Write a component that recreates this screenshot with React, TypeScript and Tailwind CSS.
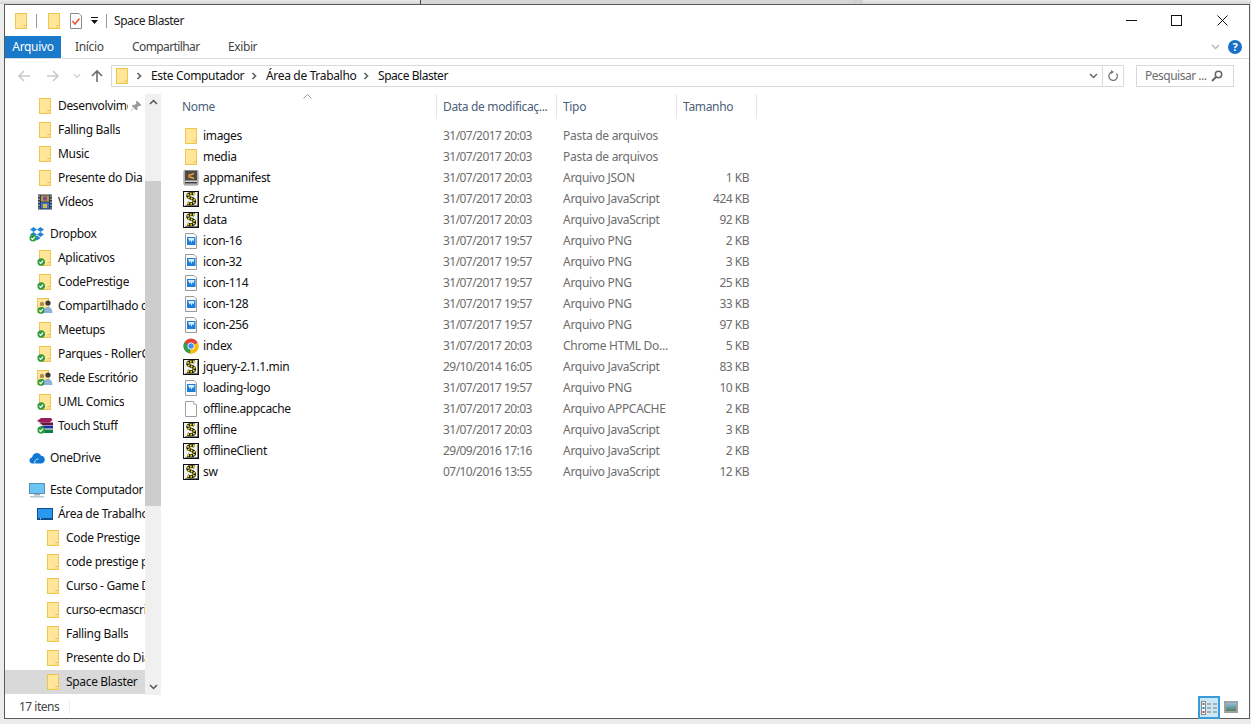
import React from "react";

const Folder = () => (
  <svg width="16" height="16" viewBox="0 0 16 16">
    <rect x="2.500" y="0.500" width="11" height="15" fill="#ffe698" stroke="#eec64f" />
    <path d="M11 15.500V12.500H13.500" fill="#fff2c0" stroke="#eec64f" />
  </svg>
);

const Check = () => (
  <g>
    <circle cx="4.200" cy="12" r="3.800" fill="#2f9e3f" />
    <path d="M2.400 12l1.300 1.400 2.400-2.700" fill="none" stroke="#fff" strokeWidth="1.200" />
  </g>
);

const SyncFolder = () => (
  <svg width="16" height="16" viewBox="0 0 16 16">
    <rect x="2.500" y="0.500" width="11" height="15" fill="#ffe698" stroke="#eec64f" />
    <path d="M11 15.500V12.500H13.500" fill="#fff2c0" stroke="#eec64f" />
    <Check />
  </svg>
);

const SharedFolder = () => (
  <svg width="16" height="16" viewBox="0 0 16 16">
    <rect x="0.500" y="0.500" width="11" height="14" fill="#ffe698" stroke="#eec64f" />
    <circle cx="5" cy="6" r="2.200" fill="#b58a63" />
    <path d="M1.500 13c0-3 1.500-4 3.500-4s3 1 3 4z" fill="#7d9b75" />
    <circle cx="11" cy="5" r="2.600" fill="#3c3a3a" />
    <path d="M6.500 15c0-4 2-6 4.500-6s4.500 2 4.500 6z" fill="#8fb2d8" />
    <circle cx="4" cy="12.400" r="3.400" fill="#2f9e3f" />
    <path d="M2.300 12.400l1.300 1.300 2.300-2.600" fill="none" stroke="#fff" strokeWidth="1.200" />
  </svg>
);

const Rar = () => (
  <svg width="16" height="16" viewBox="0 0 16 16">
    <path d="M0 3l4-3h10l1.500 2-3 2.500H3z" fill="#9a1c58" />
    <rect x="3" y="4.500" width="13" height="2.500" fill="#6e123c" />
    <rect x="4" y="7.500" width="12" height="3" fill="#1e2f9c" />
    <rect x="4" y="11.500" width="12" height="3.500" fill="#0f7f4a" />
    <path d="M0 3.500l5.500 4.500" stroke="#e5e5e5" strokeWidth="1.500" />
    <Check />
  </svg>
);

const Js = () => (
  <svg width="16" height="16" viewBox="0 0 16 16">
    <rect x="0.500" y="0.500" width="15" height="15" fill="#f4f4ee" stroke="#111" />
    <path d="M15 1.500V15H2" fill="none" stroke="#111" />
    <path d="M11.500 3C8 1.800 4.500 3 5 5.300c.5 2.200 6.500 2 6.500 4.700 0 2.700-4 3.500-7 2" fill="none" stroke="#111" strokeWidth="3.200" />
    <path d="M11.500 3C8 1.800 4.500 3 5 5.300c.5 2.200 6.500 2 6.500 4.700 0 2.700-4 3.500-7 2" fill="none" stroke="#f5e51e" strokeWidth="2" strokeDasharray="1.600 1.300" />
  </svg>
);

const Png = () => (
  <svg width="16" height="16" viewBox="0 0 16 16">
    <path d="M2.500 0.500H11L13.500 3V15.500H2.500z" fill="#fbfbfb" stroke="#9a9a9a" />
    <rect x="4" y="4" width="8.500" height="8" fill="#1a7fd8" />
    <path d="M5 5h6.500l-1 3.500-1-1.500-1 3-1-3-1 1.500z" fill="#d8edfb" />
  </svg>
);

const Doc = () => (
  <svg width="16" height="16" viewBox="0 0 16 16">
    <path d="M2.500 0.500H10.500L13.500 3.500V15.500H2.500z" fill="#fff" stroke="#a0a0a0" />
    <path d="M10.500 0.500V3.500H13.500" fill="#f2f2f2" stroke="#c0c0c0" />
  </svg>
);

const Sublime = () => (
  <svg width="16" height="16" viewBox="0 0 16 16">
    <rect x="1" y="0.500" width="14" height="14.500" rx="1" fill="#d4d4d4" stroke="#8a8a8a" />
    <rect x="2" y="1" width="12" height="9.500" fill="#4a4a4a" />
    <path d="M5 6.500l6-2V2.800L5 4.800zM5 5.500l6 2V9.200L5 7.200z" fill="#ee9a30" />
    <rect x="2" y="12" width="12" height="1.500" fill="#3a3a3a" />
  </svg>
);

const Chrome = () => (
  <svg width="16" height="16" viewBox="0 0 16 16">
    <circle cx="8" cy="8" r="7.500" fill="#db4437" />
    <path d="M8 8L1.500 4.200A7.500 7.500 0 0 0 7 15.400z" fill="#2f9e4f" />
    <path d="M8 8l6.800-3.200A7.500 7.500 0 0 1 7 15.400z" fill="#f4c20d" />
    <circle cx="8" cy="8" r="3.500" fill="#fff" />
    <circle cx="8" cy="8" r="2.700" fill="#4a89f3" />
  </svg>
);

const Videos = () => (
  <svg width="16" height="16" viewBox="0 0 16 16">
    <rect x="1" y="0.500" width="14" height="15" fill="#2c3d5c" />
    <path d="M2 1.500v13M14 1.500v13" stroke="#cfd6e0" strokeWidth="1.200" strokeDasharray="1.500 1.500" />
    <rect x="4" y="1.500" width="8" height="6" fill="#c79a2c" />
    <rect x="4" y="8.500" width="8" height="6" fill="#3b77c9" />
    <rect x="6" y="2.500" width="4" height="4" fill="#7a4fa0" />
    <rect x="6" y="10" width="4" height="4" fill="#d9b94a" />
  </svg>
);

const Dropbox = () => (
  <svg width="16" height="16" viewBox="0 0 16 16">
    <path d="M4.500 1L1 3.500 4.500 6 8 3.500zM11.500 1L8 3.500 11.500 6 15 3.500zM4.500 6L1 8.500 4.500 11 8 8.500zM11.500 6L8 8.500 11.500 11 15 8.500zM8 9.500l-3.500 2.400L8 14.500l3.500-2.600z" fill="#1f86d9" />
    <circle cx="4" cy="12" r="3.500" fill="#2f9e3f" />
    <path d="M2.300 12l1.300 1.400 2.300-2.600" fill="none" stroke="#fff" strokeWidth="1.200" />
  </svg>
);

const OneDrive = () => (
  <svg width="16" height="16" viewBox="0 0 16 16">
    <path d="M3.500 13.500C1.500 13.500 0.500 12 0.500 10.500c0-1.500 1-2.700 2.500-2.900C3.500 5 5.500 3 8 3c1.800 0 3.400 1 4 2.700 2.200 0 3.800 1.600 3.800 3.900 0 2.200-1.500 3.900-3.300 3.900z" fill="#0f78d4" />
    <path d="M6 13.500c-1-2.500 1-4.500 3.500-4.500" fill="none" stroke="#fff" strokeWidth="0.800" />
  </svg>
);

const Pc = () => (
  <svg width="16" height="16" viewBox="0 0 16 16">
    <rect x="0.500" y="1.500" width="15" height="10" fill="#6cc4f5" stroke="#5a8fb5" />
    <rect x="5" y="12" width="6" height="1.500" fill="#9ab0c0" />
    <rect x="1" y="14" width="14" height="1.500" fill="#b8c6d0" />
  </svg>
);

const Desktop = () => (
  <svg width="16" height="16" viewBox="0 0 16 16">
    <rect x="0.500" y="2.500" width="15" height="11" fill="#2b98f0" stroke="#0f4f8f" />
    <rect x="1" y="12" width="14" height="1.500" fill="#0f4f8f" />
    <rect x="3" y="12.300" width="1" height="1" fill="#fff" />
  </svg>
);

const Chev = ({ up = false, color = "#6d6d6d", w = 9 }: { up?: boolean; color?: string; w?: number }) => (
  <svg width={w} height="6" viewBox="0 0 9 6">
    <path d={up ? "M1 5l3.500-3.500L8 5" : "M1 1l3.500 3.500L8 1"} fill="none" stroke={color} strokeWidth="1.500" />
  </svg>
);

const Crumb = () => (
  <svg width="6" height="8" viewBox="0 0 6 8">
    <path d="M1.500 1l3 3-3 3" fill="none" stroke="#666" strokeWidth="1.700" />
  </svg>
);

const Arrow = ({ d, color }: { d: string; color: string }) => (
  <svg width="14" height="14" viewBox="0 0 14 14">
    <path d={d} fill="none" stroke={color} strokeWidth="1.600" />
  </svg>
);

type NavItem = { label: string; icon?: React.ReactNode; level: number; gap?: boolean; selected?: boolean; pin?: boolean };

const nav: NavItem[] = [
  { label: "Desenvolvimento", icon: <Folder />, level: 1, pin: true },
  { label: "Falling Balls", icon: <Folder />, level: 1 },
  { label: "Music", icon: <Folder />, level: 1 },
  { label: "Presente do Dia dos Pais", icon: <Folder />, level: 1 },
  { label: "Vídeos", icon: <Videos />, level: 1 },
  { label: "Dropbox", icon: <Dropbox />, level: 0, gap: true },
  { label: "Aplicativos", icon: <SyncFolder />, level: 1 },
  { label: "CodePrestige", icon: <SyncFolder />, level: 1 },
  { label: "Compartilhado com", icon: <SharedFolder />, level: 1 },
  { label: "Meetups", icon: <SyncFolder />, level: 1 },
  { label: "Parques - RollerCoaster", icon: <SyncFolder />, level: 1 },
  { label: "Rede Escritório", icon: <SharedFolder />, level: 1 },
  { label: "UML Comics", icon: <SyncFolder />, level: 1 },
  { label: "Touch Stuff", icon: <Rar />, level: 1 },
  { label: "OneDrive", icon: <OneDrive />, level: 0, gap: true },
  { label: "Este Computador", icon: <Pc />, level: 0, gap: true },
  { label: "Área de Trabalho", icon: <Desktop />, level: 1 },
  { label: "Code Prestige", icon: <Folder />, level: 2 },
  { label: "code prestige project", icon: <Folder />, level: 2 },
  { label: "Curso - Game Development", icon: <Folder />, level: 2 },
  { label: "curso-ecmascript", icon: <Folder />, level: 2 },
  { label: "Falling Balls", icon: <Folder />, level: 2 },
  { label: "Presente do Dia dos Pais", icon: <Folder />, level: 2 },
  { label: "Space Blaster", icon: <Folder />, level: 2, selected: true },
];

const levelClass = ["pl-[24px]", "pl-[32px]", "pl-[40px]"];

const files: [React.ReactNode, string, string, string, string][] = [
  [<Folder />, "images", "31/07/2017 20:03", "Pasta de arquivos", ""],
  [<Folder />, "media", "31/07/2017 20:03", "Pasta de arquivos", ""],
  [<Sublime />, "appmanifest", "31/07/2017 20:03", "Arquivo JSON", "1 KB"],
  [<Js />, "c2runtime", "31/07/2017 20:03", "Arquivo JavaScript", "424 KB"],
  [<Js />, "data", "31/07/2017 20:03", "Arquivo JavaScript", "92 KB"],
  [<Png />, "icon-16", "31/07/2017 19:57", "Arquivo PNG", "2 KB"],
  [<Png />, "icon-32", "31/07/2017 19:57", "Arquivo PNG", "3 KB"],
  [<Png />, "icon-114", "31/07/2017 19:57", "Arquivo PNG", "25 KB"],
  [<Png />, "icon-128", "31/07/2017 19:57", "Arquivo PNG", "33 KB"],
  [<Png />, "icon-256", "31/07/2017 19:57", "Arquivo PNG", "97 KB"],
  [<Chrome />, "index", "31/07/2017 20:03", "Chrome HTML Do...", "5 KB"],
  [<Js />, "jquery-2.1.1.min", "29/10/2014 16:05", "Arquivo JavaScript", "83 KB"],
  [<Png />, "loading-logo", "31/07/2017 19:57", "Arquivo PNG", "10 KB"],
  [<Doc />, "offline.appcache", "31/07/2017 20:03", "Arquivo APPCACHE", "2 KB"],
  [<Js />, "offline", "31/07/2017 20:03", "Arquivo JavaScript", "3 KB"],
  [<Js />, "offlineClient", "29/09/2016 17:16", "Arquivo JavaScript", "2 KB"],
  [<Js />, "sw", "07/10/2016 13:55", "Arquivo JavaScript", "12 KB"],
];

const Sep = () => <div className="w-px h-[14px] bg-[#9a9a9a]" />;

export default function App() {
  return (
    <div className="w-[1251px] h-[724px] flex flex-col bg-[#ececec] overflow-hidden text-[12px] leading-[16px] tracking-[-0.33px] text-[#111] font-['Noto_Sans','Open_Sans',sans-serif]">
      <div className="h-[4px] shrink-0 flex bg-gradient-to-b from-[#ececec] to-[#d2d2d2]">
        <div className="w-[420px]" />
        <div className="w-px bg-[#444]" />
        <div className="w-[432px] bg-[#d6d6d6]" />
        <div className="w-[10px] bg-[#cfcfcf]" />
      </div>
      <div className="ml-[4px] mr-[1px] mb-[5px] flex-1 min-h-0 flex flex-col bg-white border border-[#5a5a5a]">
        {/* Title bar */}
        <div className="h-[31px] shrink-0 flex items-center">
          <div className="ml-[8px]"><Folder /></div>
          <div className="ml-[7px]"><Sep /></div>
          <div className="ml-[9px]"><Folder /></div>
          <div className="ml-[6px]">
            <svg width="16" height="16" viewBox="0 0 16 16">
              <path d="M2.500 0.500H11L13.500 3V15.500H2.500z" fill="#fdfdfd" stroke="#8a8a8a" />
              <path d="M4.500 8l2.500 3 4.500-5.500" fill="none" stroke="#e2562d" strokeWidth="1.500" />
            </svg>
          </div>
          <div className="ml-[7px] flex flex-col items-center gap-[2px]">
            <div className="w-[7px] h-px bg-[#111]" />
            <svg width="7" height="4" viewBox="0 0 7 4"><path d="M0 0h7L3.500 4z" fill="#111" /></svg>
          </div>
          <div className="ml-[8px]"><Sep /></div>
          <div className="ml-[7px] text-[#222] tracking-[-0.45px]">Space Blaster</div>
          <div className="ml-auto flex items-center">
            <div className="w-[11px] h-px bg-[#111]" />
            <div className="ml-[34px] w-[11px] h-[11px] border border-[#111]" />
            <svg className="ml-[35px] mr-[21px]" width="11" height="11" viewBox="0 0 11 11">
              <path d="M0.500 0.500l10 10M10.500 0.500l-10 10" stroke="#111" strokeWidth="1" />
            </svg>
          </div>
        </div>
        {/* Tabs */}
        <div className="h-[23px] shrink-0 flex items-stretch border-b border-[#dadbdc] text-[#444]">
          <div className="w-[56px] bg-[#1979ca] text-white flex items-center justify-center">Arquivo</div>
          <div className="ml-[14px] w-[57px] flex items-center">Início</div>
          <div className="w-[96px] flex items-center tracking-[-0.6px]">Compartilhar</div>
          <div className="flex items-center tracking-[-0.4px]">Exibir</div>
          <div className="ml-auto flex items-center gap-[7px] mr-[7px]">
            <Chev color="#b8b8b8" w={11} />
            <div className="w-[14px] h-[14px] rounded-full bg-[#1a6fc9] text-white text-[11px] font-bold flex items-center justify-center">?</div>
          </div>
        </div>
        {/* Address */}
        <div className="h-[34px] shrink-0 flex items-center">
          <div className="ml-[12px] flex items-center">
            <Arrow d="M13 7H2M7 2L2 7l5 5" color="#c9c9c9" />
            <div className="ml-[15px]"><Arrow d="M1 7h11M7 2l5 5-5 5" color="#c9c9c9" /></div>
            <div className="ml-[13px]"><Chev color="#d0d0d0" w={8} /></div>
            <div className="ml-[9px]"><Arrow d="M7 13V2M2 7l5-5 5 5" color="#6d6d6d" /></div>
          </div>
          <div className="ml-[7px] w-[1013px] h-[22px] border border-[#d9d9d9] flex items-center">
            <div className="ml-[2px]"><Folder /></div>
            <div className="ml-[6px]"><Crumb /></div>
            <div className="ml-[9px] w-[94px] whitespace-nowrap">Este Computador</div>
            <div className="ml-[6px]"><Crumb /></div>
            <div className="ml-[9px] w-[91px] whitespace-nowrap">Área de Trabalho</div>
            <div className="ml-[6px]"><Crumb /></div>
            <div className="ml-[9px] whitespace-nowrap tracking-[-0.45px]">Space Blaster</div>
            <div className="ml-auto mr-[4px]"><Chev color="#666" /></div>
            <div className="w-[21px] self-stretch border-l border-[#d9d9d9] flex items-center justify-center">
              <svg width="12" height="12" viewBox="0 0 12 12">
                <path d="M9.500 3.500A4.300 4.300 0 1 1 5 2" fill="none" stroke="#777" strokeWidth="1.300" />
                <path d="M4 0v4l3-2z" fill="#777" />
              </svg>
            </div>
          </div>
          <div className="ml-[12px] w-[98px] h-[22px] border border-[#d9d9d9] flex items-center text-[#6d6d6d]">
            <span className="ml-[8px] whitespace-nowrap tracking-[-0.5px]">Pesquisar ...</span>
            <svg className="ml-auto mr-[10px]" width="12" height="12" viewBox="0 0 12 12">
              <circle cx="7.500" cy="4.500" r="3.200" fill="none" stroke="#666" strokeWidth="1.500" />
              <path d="M5 7l-4 4" stroke="#666" strokeWidth="2" />
            </svg>
          </div>
        </div>
        {/* Content */}
        <div className="flex-1 min-h-0 flex">
          <div className="w-[140px] shrink-0 pt-px overflow-hidden">
            {nav.map((n, i) => (
              <div key={i} className={`${n.gap ? "mt-[8px]" : ""} h-[24px] flex items-center whitespace-nowrap overflow-hidden ${levelClass[n.level]} ${n.selected ? "bg-[#d9d9d9]" : ""}`}>
                <div className="w-4 h-4 shrink-0">{n.icon}</div>
                <div className={`ml-[5px] overflow-hidden ${n.pin ? "w-[70px] shrink-0" : ""}`}>{n.label}</div>
                {n.pin && (
                  <svg className="ml-[3px] shrink-0" width="10" height="10" viewBox="0 0 10 10">
                    <path d="M6 0l4 4-1 1-1-.500-2 2 .300 2-1 .500-4-4 .500-1 2 .300 2-2L5 1zM3 6.500L0 10" fill="#999" stroke="#999" strokeWidth="0.600" />
                  </svg>
                )}
              </div>
            ))}
          </div>
          <div className="w-[16px] shrink-0 my-px bg-[#f0f0f0] flex flex-col">
            <div className="h-[16px] flex items-center justify-center"><Chev up color="#555" /></div>
            <div className="mt-[71px] h-[325px] bg-[#cdcdcd]" />
            <div className="mt-auto h-[16px] flex items-center justify-center"><Chev color="#555" /></div>
          </div>
          <div className="flex-1 min-w-0 relative">
            <svg className="absolute left-[142px] top-[1px]" width="9" height="5" viewBox="0 0 9 5">
              <path d="M0.500 4.500l4-4 4 4" fill="none" stroke="#9a9a9a" />
            </svg>
            <div className="mt-px h-[25px] flex items-center text-[#4c607a]">
              <div className="w-[276px] h-full pl-[21px] flex items-center border-r border-[#e5e5e5]">Nome</div>
              <div className="w-[120px] h-full pl-[6px] flex items-center border-r border-[#e5e5e5] whitespace-nowrap">Data de modificaç...</div>
              <div className="w-[120px] h-full pl-[6px] flex items-center border-r border-[#e5e5e5]">Tipo</div>
              <div className="w-[80px] h-full pl-[6px] flex items-center border-r border-[#e5e5e5]">Tamanho</div>
            </div>
            <div className="mt-[6px]">
              {files.map(([icon, name, date, type, size], i) => (
                <div key={i} className="h-[21px] flex items-center whitespace-nowrap">
                  <div className="w-[276px] pl-[22px] flex items-center">
                    <div className="w-4 h-4 shrink-0">{icon}</div>
                    <div className="ml-[4px]">{name}</div>
                  </div>
                  <div className="w-[120px] pl-[6px] text-[#6d6d6d] tracking-[-0.55px]">{date}</div>
                  <div className="w-[120px] pl-[6px] text-[#6d6d6d] tracking-[-0.28px]">{type}</div>
                  <div className="w-[72px] text-right text-[#6d6d6d] tracking-[-0.5px]">{size}</div>
                </div>
              ))}
            </div>
          </div>
        </div>
        {/* Status */}
        <div className="h-[22px] shrink-0 flex items-center text-[#444]">
          <div className="ml-[14px] tracking-[-0.5px]">17 itens</div>
          <div className="ml-[10px] w-px h-[14px] bg-[#efefef]" />
          <div className="ml-auto w-[22px] h-[23px] mt-px border-2 border-[#3a9bd9] bg-[#cce8f6] flex items-center justify-center">
            <svg width="16" height="14" viewBox="0 0 16 14">
              <rect x="0.500" y="0.500" width="4" height="13" fill="#fff" stroke="#888" />
              <rect x="1.500" y="2" width="2" height="2" fill="#777" />
              <rect x="1.500" y="6" width="2" height="2" fill="#2a7fd0" />
              <rect x="1.500" y="10" width="2" height="2" fill="#d04030" />
              <path d="M6 3h4M12 3h4M6 7h4M12 7h4M6 11h4M12 11h4" stroke="#777" />
            </svg>
          </div>
          <div className="ml-[4px] mr-[11px] w-[14px] h-[12px] border-2 border-[#a0a0a0] bg-gradient-to-b from-[#8fc0e8] to-[#4f7f5f]" />
        </div>
      </div>
    </div>
  );
}
